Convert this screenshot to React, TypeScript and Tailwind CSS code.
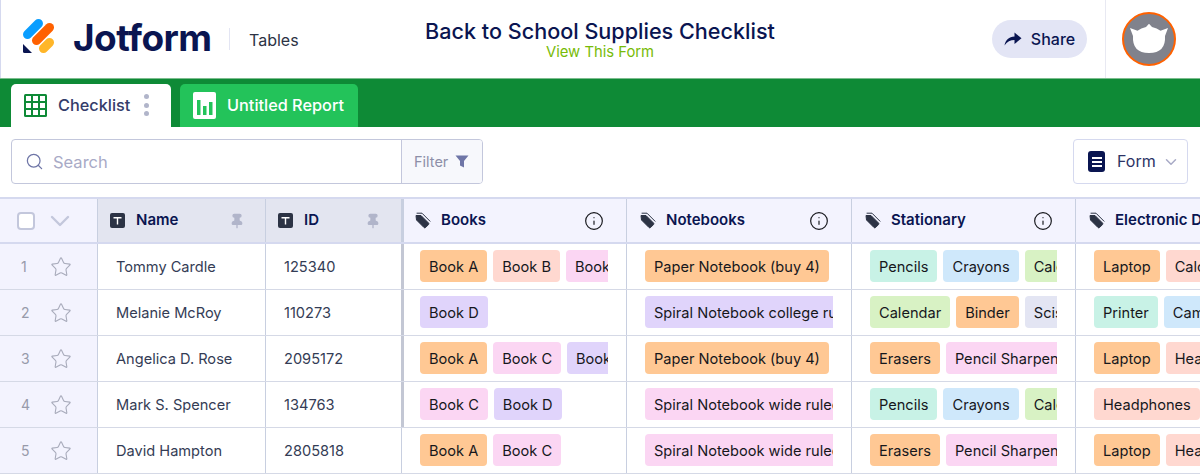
import { ChevronDown, Info, Pin, Search, Star } from 'lucide-react';

const font = "font-['Inter','Liberation_Sans',sans-serif]";

const orange = 'bg-[#ffc894]';
const salmon = 'bg-[#ffd8d0]';
const pink = 'bg-[#fbd6f3]';
const purple = 'bg-[#e0d4fb]';
const teal = 'bg-[#c8f2e6]';
const blue = 'bg-[#cfe8fb]';
const green = 'bg-[#d8f2c4]';
const gray = 'bg-[#e3e5f3]';

type Tag = [string, string];

// column widths and left padding for the four tag columns
const colClass = [
  'w-[223px] pl-[16px]',
  'w-[225px] pl-[18px]',
  'w-[224px] pl-[18px]',
  'w-[225px] pl-[18px]',
];

const rows: { name: string; id: string; cols: Tag[][]; thick: boolean }[] = [
  {
    name: 'Tommy Cardle',
    id: '125340',
    thick: true,
    cols: [
      [['Book A', orange], ['Book B', salmon], ['Book C', pink]],
      [['Paper Notebook (buy 4)', orange]],
      [['Pencils', teal], ['Crayons', blue], ['Calendar', green]],
      [['Laptop', orange], ['Calculator', salmon]],
    ],
  },
  {
    name: 'Melanie McRoy',
    id: '110273',
    thick: true,
    cols: [
      [['Book D', purple]],
      [['Spiral Notebook college ruled', purple]],
      [['Calendar', green], ['Binder', orange], ['Scissors', gray]],
      [['Printer', teal], ['Camera', blue]],
    ],
  },
  {
    name: 'Angelica D. Rose',
    id: '2095172',
    thick: true,
    cols: [
      [['Book A', orange], ['Book C', pink], ['Book D', purple]],
      [['Paper Notebook (buy 4)', orange]],
      [['Erasers', orange], ['Pencil Sharpener', pink]],
      [['Laptop', orange], ['Headphones', salmon]],
    ],
  },
  {
    name: 'Mark S. Spencer',
    id: '134763',
    thick: true,
    cols: [
      [['Book C', pink], ['Book D', purple]],
      [['Spiral Notebook wide ruled', pink]],
      [['Pencils', teal], ['Crayons', blue], ['Calendar', green]],
      [['Headphones', salmon]],
    ],
  },
  {
    name: 'David Hampton',
    id: '2805818',
    thick: false,
    cols: [
      [['Book A', orange], ['Book C', pink]],
      [['Spiral Notebook wide ruled', pink]],
      [['Erasers', orange], ['Pencil Sharpener', pink]],
      [['Laptop', orange], ['Headphones', salmon]],
    ],
  },
];

function Logo() {
  return (
    <svg width="31" height="34" viewBox="0 0 31 34" className="mb-[6px] shrink-0">
      <rect x="-2.25" y="5.5" width="24.5" height="9" rx="4.5" transform="rotate(-45 10 10)" fill="#0a9eff" />
      <rect x="6.3" y="10.5" width="27.4" height="9" rx="4.5" transform="rotate(-45 20 15)" fill="#ff6100" />
      <rect x="14.75" y="22" width="17.5" height="9" rx="4.5" transform="rotate(-45 23.5 26.5)" fill="#ffb629" />
      <path d="M0 25 L9 34 H1.5 Q0 34 0 32.5 Z" fill="#0a1551" />
    </svg>
  );
}

function TagIcon() {
  return (
    <svg width="17" height="17" viewBox="0 0 17 17" className="shrink-0">
      <path
        d="M2 3.5 L7 3.5 L14.5 11 Q15.3 11.8 14.5 12.6 L11.6 15.5 Q10.8 16.3 10 15.5 L2.5 8 Z"
        fill="#2c3345"
        stroke="#2c3345"
        strokeLinejoin="round"
      />
      <path d="M3 1.2 L8 1.2 L16 9.2" stroke="#2c3345" strokeWidth="1" fill="none" strokeLinecap="round" />
    </svg>
  );
}

function TIcon() {
  return (
    <span className="flex h-[15px] w-[15px] shrink-0 items-center justify-center rounded-[2px] bg-[#2c3345]">
      <svg width="9" height="9" viewBox="0 0 9 9">
        <path d="M0.5 1h8v1.4H5.2V8.4H3.8V2.4H0.5z" fill="#ffffff" />
      </svg>
    </span>
  );
}

function Cat() {
  return (
    <svg width="54" height="54" viewBox="0 0 54 54">
      <circle cx="27" cy="27" r="26" fill="#80828c" stroke="#ff6100" strokeWidth="2" />
      <path
        d="M8 16 L15.5 18.8 Q19 16.2 24 15 L27 11.8 L30 15 Q35 16.2 38.5 18.8 L46 16 L43 24 Q44 41 27 41 Q10 41 11 24 Z"
        fill="#ffffff"
      />
    </svg>
  );
}

function PinnedHead({ label, width }: { label: string; width: string }) {
  return (
    <div className={`flex h-full shrink-0 items-center border-r border-[#c8cfe0] bg-[#e3e5f0] pl-[12px] pr-[20px] ${width}`}>
      <TIcon />
      <span className="ml-[11px] flex-1 text-[15px] font-semibold text-[#0a1551]">{label}</span>
      <Pin size={16} className="fill-[#b1b5ca] text-[#b1b5ca]" />
    </div>
  );
}

function TagHead({ label, info, width }: { label: string; info: boolean; width: string }) {
  return (
    <div className={`flex h-full shrink-0 items-center border-r border-[#c8cfe0] pr-[22px] ${width}`}>
      <TagIcon />
      <span className="ml-[10px] flex-1 whitespace-nowrap text-[15px] font-semibold text-[#0a1551]">{label}</span>
      {info && <Info size={20} strokeWidth={1.4} className="text-[#16171c]" />}
    </div>
  );
}

function TagCell({ tags, index }: { tags: Tag[]; index: number }) {
  return (
    <div className={`flex h-full shrink-0 items-center ${colClass[index]} ${index === 3 ? 'pr-0' : 'border-r border-[#c8cfe0] pr-[18px]'}`}>
      <div className="mb-[1px] flex w-full gap-[6px] overflow-hidden">
        {tags.map(([text, color]) => (
          <span key={text} className={`h-[32px] shrink-0 whitespace-nowrap rounded-[4px] px-[9px] text-[14.6px] leading-[34px] text-[#16171c] ${color}`}>
            {text}
          </span>
        ))}
      </div>
    </div>
  );
}

export default function App() {
  return (
    <div className={`flex h-[474px] w-[1200px] flex-col overflow-hidden bg-white ${font}`}>
      <header className="flex h-[78px] shrink-0 items-center border-l border-[#d5d9ef] pl-[22px]">
        <Logo />
        <span className="mb-[3px] ml-[19px] w-[140px] text-[37px] font-bold leading-none tracking-[-0.55px] text-[#0a1551]">Jotform</span>
        <div className="ml-[16px] h-[22px] w-px bg-[#e3e5f3]" />
        <span className="ml-[19px] mt-[2px] w-[120px] text-[16px] text-[#2c3345]">Tables</span>
        <div className="mb-[1px] ml-[55px] flex w-[352px] flex-col items-center">
          <span className="whitespace-nowrap text-[21.6px] font-medium leading-[26px] text-[#0a1551]">Back to School Supplies Checklist</span>
          <span className="text-[14.8px] leading-[16px] text-[#78bb07]">View This Form</span>
        </div>
        <div className="ml-[216px] flex h-[38px] w-[95px] items-center justify-center gap-[9px] rounded-full bg-[#e3e5f5]">
          <svg width="18" height="14" viewBox="0 0 18 14">
            <path d="M0.5 13.5C1.5 8 5 5 10.5 4.6V0.5L17.5 6.3L10.5 12V8C6.5 8 3 9.6 0.5 13.5Z" fill="#0a1551" />
          </svg>
          <span className="text-[16px] font-medium text-[#0a1551]">Share</span>
        </div>
        <div className="ml-[18px] h-full w-px bg-[#e8e9f2]" />
        <div className="ml-[16px]">
          <Cat />
        </div>
      </header>

      <nav className="flex h-[49px] shrink-0 items-end gap-[9px] border-t border-[#7cbd8e] bg-[#0e8a36] pl-[11px]">
        <div className="flex h-[43px] w-[160px] items-center rounded-t-[5px] bg-white pb-[1px] pl-[13px]">
          <svg width="23" height="23" viewBox="0 0 23 23">
            <rect width="23" height="23" rx="1.5" fill="#0e8a36" />
            <path d="M2 2h5v5H2zM9 2h5v5H9zM16 2h5v5h-5zM2 9h5v5H2zM9 9h5v5H9zM16 9h5v5h-5zM2 16h5v5H2zM9 16h5v5H9zM16 16h5v5h-5z" fill="#ffffff" />
          </svg>
          <span className="ml-[11px] text-[16.3px] font-medium text-[#343c6a]">Checklist</span>
          <div className="ml-[14px] flex flex-col gap-[3.5px]">
            <span className="h-[5px] w-[5px] rounded-full bg-[#b1b5ca]" />
            <span className="h-[5px] w-[5px] rounded-full bg-[#b1b5ca]" />
            <span className="h-[5px] w-[5px] rounded-full bg-[#b1b5ca]" />
          </div>
        </div>
        <div className="flex h-[43px] w-[178px] items-center rounded-t-[5px] bg-[#23c35a] pb-[1px] pl-[13px]">
          <svg width="23" height="27" viewBox="0 0 23 27">
            <rect width="23" height="27" rx="2" fill="#ffffff" />
            <path d="M4 8h3.5v15H4zM10 14h3.5v9H10zM16 10h3.5v13H16z" fill="#23c35a" />
          </svg>
          <span className="ml-[11px] text-[16.3px] font-medium text-white">Untitled Report</span>
        </div>
      </nav>

      <div className="flex h-[70px] shrink-0 items-center justify-between pb-[1px] pl-[11px] pr-[12px]">
        <div className="flex h-[45px] w-[472px] overflow-hidden rounded-[4px] border border-[#c3c7dc]">
          <div className="flex flex-1 items-center pl-[13px]">
            <Search size={19} strokeWidth={1.6} className="text-[#6f76a7]" />
            <span className="ml-[9px] mt-[1px] text-[16.5px] text-[#a8aac6]">Search</span>
          </div>
          <div className="flex w-[81px] items-center gap-[7px] border-l border-[#c3c7dc] bg-[#f7f8fc] pl-[12px]">
            <span className="text-[14.5px] text-[#8d8fa8]">Filter</span>
            <svg width="14" height="13" viewBox="0 0 14 13">
              <path d="M0.5 0.5H13.5L9 6V12.5L5 10.5V6Z" fill="#6f76a7" />
            </svg>
          </div>
        </div>
        <div className="flex h-[45px] w-[115px] items-center rounded-[4px] border border-[#d5d9ef] pl-[14px]">
          <span className="flex h-[21px] w-[17px] flex-col items-center justify-center gap-[2px] rounded-[3px] bg-[#0a1551]">
            <span className="h-[2px] w-[10px] bg-white" />
            <span className="h-[2px] w-[10px] bg-white" />
            <span className="h-[2px] w-[10px] bg-white" />
          </span>
          <span className="mb-[1px] ml-[12px] text-[16px] text-[#2c3365]">Form</span>
          <ChevronDown size={18} strokeWidth={2} className="ml-[6px] text-[#a8aac6]" />
        </div>
      </div>

      <div className="flex h-[47px] w-[1400px] shrink-0 items-center border-y-2 border-[#d5d9ef] bg-[#f3f3fe]">
        <div className="flex h-full w-[98px] shrink-0 items-center border-r border-[#c8cfe0] pl-[17px]">
          <span className="h-[18px] w-[18px] rounded-[4px] border-2 border-[#c3c7dc] bg-white" />
          <ChevronDown size={32} strokeWidth={1.8} className="ml-[9px] text-[#c3c7dc]" />
        </div>
        <PinnedHead label="Name" width="w-[168px]" />
        <PinnedHead label="ID" width="w-[138px] border-r-[3px]" />
        <TagHead label="Books" info width="w-[223px] pl-[10px]" />
        <TagHead label="Notebooks" info width="w-[225px] pl-[12px]" />
        <TagHead label="Stationary" info width="w-[224px] pl-[12px]" />
        <TagHead label="Electronic Devices" info={false} width="w-[225px] pl-[12px]" />
      </div>

      {rows.map((row, i) => (
        <div key={row.id} className="flex h-[46px] w-[1400px] shrink-0 items-center border-b border-[#d5d9e6] text-[14.6px] text-[#343c55]">
          <div className="flex h-full w-[98px] shrink-0 items-center border-r border-[#c8cfe0] bg-[#f3f3fe] pl-[21px]">
            <span className="w-[20px] text-[14px] text-[#979aaa]">{i + 1}</span>
            <Star size={22} strokeWidth={1.2} className="ml-[9px] text-[#a8abbb]" />
          </div>
          <div className="flex h-full w-[168px] shrink-0 items-center border-r border-[#c8cfe0] pl-[18px] pt-[2px]">{row.name}</div>
          <div className={`flex h-full shrink-0 items-center pl-[18px] pt-[2px] ${row.thick ? 'w-[138px] border-r-[3px] border-[#c3c7d4]' : 'mr-[2px] w-[136px] border-r border-[#c8cfe0]'}`}>
            {row.id}
          </div>
          {row.cols.map((tags, c) => (
            <TagCell key={c} tags={tags} index={c} />
          ))}
        </div>
      ))}
    </div>
  );
}
